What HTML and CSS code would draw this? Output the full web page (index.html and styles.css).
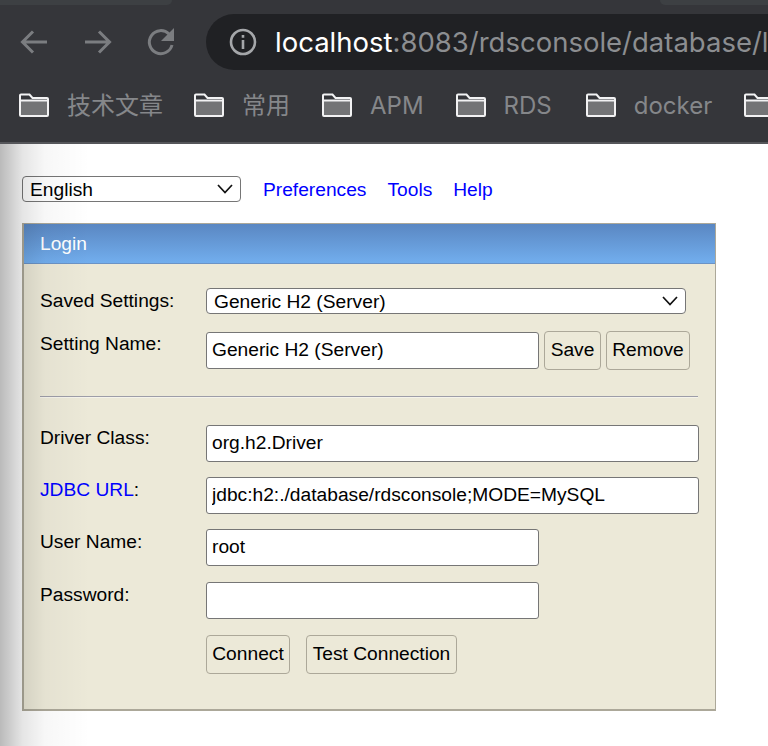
FILE: index.html
```html
<!DOCTYPE html>
<html lang="en">
<head>
<meta charset="utf-8">
<title>H2 Console Login</title>
<link rel="stylesheet" href="styles.css">
</head>
<body>
<header class="chrome">
  <div class="tabs"><div class="tab tab-left"></div><div class="tab tab-right"></div></div>
  <div class="toolbar">
    <svg class="nav-icon" width="32" height="32" viewBox="0 0 32 32" fill="none" stroke="#7b7d80" stroke-width="3"><path d="M29 16H5M15 5.500 4.500 16 15 26.500"/></svg>
    <svg class="nav-icon" width="32" height="32" viewBox="0 0 32 32" fill="none" stroke="#7b7d80" stroke-width="3"><path d="M3 16h24M17 5.500 27.500 16 17 26.500"/></svg>
    <svg class="nav-icon" width="32" height="32" viewBox="0 0 32 32" fill="none"><path d="M26 19a11.500 11.500 0 1 1-3-11" stroke="#7b7d80" stroke-width="3"/><path d="M28 2v13H15z" fill="#7b7d80"/></svg>
    <div class="omnibox">
      <svg width="28" height="28" viewBox="0 0 28 28" fill="none"><circle cx="14" cy="14" r="12" stroke="#a5a7aa" stroke-width="2.600"/><path d="M12.700 7h2.600v2.800h-2.600zM12.700 12h2.600v9h-2.600z" fill="#a5a7aa"/></svg>
      <span class="url"><span class="host">localhost</span>:8083/rdsconsole/database/l</span>
    </div>
  </div>
  <nav class="bookmarks">
    <a class="bm bm-1"><svg class="folder" width="32" height="26" viewBox="0 0 32 26"><use href="#folder"/></svg><span class="cjk">技术文章</span></a>
    <a class="bm bm-2"><svg class="folder" width="32" height="26" viewBox="0 0 32 26"><use href="#folder"/></svg><span class="cjk">常用</span></a>
    <a class="bm bm-3"><svg class="folder" width="32" height="26" viewBox="0 0 32 26"><use href="#folder"/></svg>APM</a>
    <a class="bm bm-4"><svg class="folder" width="32" height="26" viewBox="0 0 32 26"><use href="#folder"/></svg>RDS</a>
    <a class="bm bm-5"><svg class="folder" width="32" height="26" viewBox="0 0 32 26"><use href="#folder"/></svg>docker</a>
    <a class="bm"><svg class="folder" width="32" height="26" viewBox="0 0 32 26"><use href="#folder"/></svg></a>
  </nav>
</header>

<svg class="defs" width="0" height="0">
  <defs>
    <symbol id="folder" viewBox="0 0 32 26">
      <path d="M2 8h28v15H2z" fill="#737476"/>
      <path d="M2 23V3.500a1 1 0 0 1 1-1h8.500l3 3.500H29a1 1 0 0 1 1 1v16a1 1 0 0 1-1 1H3a1 1 0 0 1-1-1zM2 8.500h28" fill="none" stroke="#f2f2f3" stroke-width="2"/>
    </symbol>
  </defs>
</svg>

<main class="page">
  <div class="top-row">
    <div class="select-wrap lang">
      <select class="field-select"><option>English</option></select>
      <svg class="chev" width="16" height="10" viewBox="0 0 16 10" fill="none" stroke="#111" stroke-width="1.700"><path d="M1 1l7 7.500L15 1"/></svg>
    </div>
    <a class="top-link">Preferences</a>
    <a class="top-link">Tools</a>
    <a class="top-link">Help</a>
  </div>

  <section class="panel">
    <h1 class="panel-title">Login</h1>
    <form class="panel-body">
      <div class="row row-saved">
        <label class="lbl">Saved Settings:</label>
        <div class="select-wrap saved">
          <select class="field-select"><option>Generic H2 (Server)</option></select>
          <svg class="chev" width="16" height="10" viewBox="0 0 16 10" fill="none" stroke="#111" stroke-width="1.700"><path d="M1 1l7 7.500L15 1"/></svg>
        </div>
      </div>
      <div class="row row-name">
        <label class="lbl">Setting Name:</label>
        <input class="inp short" value="Generic H2 (Server)">
        <button type="button" class="btn btn-save">Save</button>
        <button type="button" class="btn btn-remove">Remove</button>
      </div>
      <hr class="rule">
      <div class="row row-field">
        <label class="lbl">Driver Class:</label>
        <input class="inp long" value="org.h2.Driver">
      </div>
      <div class="row row-field">
        <label class="lbl"><a class="jdbc">JDBC URL</a>:</label>
        <input class="inp long" value="jdbc:h2:./database/rdsconsole;MODE=MySQL">
      </div>
      <div class="row row-field row-tall">
        <label class="lbl">User Name:</label>
        <input class="inp short" value="root">
      </div>
      <div class="row row-field row-tall">
        <label class="lbl">Password:</label>
        <input class="inp short" type="password">
      </div>
      <div class="row row-actions">
        <span class="lbl"></span>
        <button type="button" class="btn btn-connect">Connect</button>
        <button type="button" class="btn btn-test">Test Connection</button>
      </div>
    </form>
  </section>
</main>
<div class="edge-shade"></div>
</body>
</html>
```
FILE: styles.css
```css
* { box-sizing: border-box; }
html, body { margin: 0; height: 100%; overflow: hidden; background: #fff; }
body { font-family: "Liberation Sans", Arial, sans-serif; font-size: 19.200px; color: #000; position: relative; }

.defs { position: absolute; }

/* browser chrome */
.chrome { height: 144px; background: #35363a; border-bottom: 2px solid #55565a; overflow: hidden; }
.tabs { height: 14px; display: flex; justify-content: space-between; }
.tab { height: 5px; background: #3d4043; }
.tab-left { width: 172px; border-bottom-right-radius: 6px; }
.tab-right { width: 108px; border-bottom-left-radius: 6px; }
.toolbar { height: 56px; display: flex; align-items: center; padding-left: 18px; }
.nav-icon { flex: none; margin-right: 32px; }
.nav-icon:nth-child(3) { margin-right: 28px; }
.omnibox { flex: 1; height: 56px; min-width: 0; background: #202124; border-radius: 28px 0 0 28px; display: flex; align-items: center; padding-left: 23px; gap: 18px; overflow: hidden; }
.omnibox svg { flex: none; }
.url { font-family: Inter, "Noto Sans", sans-serif; font-size: 27.500px; color: #8c8e91; white-space: nowrap; }
.host { color: #fff; }
.bookmarks { height: 70px; display: flex; align-items: center; padding-left: 18px; white-space: nowrap; }
.bm { flex: none; display: flex; align-items: center; gap: 17px; font-family: Inter, "Noto Sans CJK SC", sans-serif; font-size: 24px; color: #85878a; }
.cjk { padding-bottom: 4px; }
.bm-1 { margin-right: 30px; }
.bm-2, .bm-3, .bm-5 { margin-right: 31px; }
.bm-4 { margin-right: 33px; }
.folder { flex: none; }

/* page */
.page { padding: 32px 0 0 22px; }
.top-row { display: flex; align-items: center; height: 26px; }
.top-link { color: #0000ff; margin-left: 21px; padding-top: 2px; }
.lang { width: 219px; margin-right: 1px; }
.select-wrap { position: relative; height: 26px; }
.saved { width: 480px; }
.field-select { appearance: none; -webkit-appearance: none; width: 100%; height: 100%; padding: 0 0 0 7px; background: #fff; border: 1px solid #767676; border-radius: 4px; font: inherit; color: #000; }
.chev { position: absolute; right: 8px; top: 8px; pointer-events: none; }

.panel { width: 694px; height: 488px; margin-top: 21px; background: #ece9d8; border: 2px solid #aca899; border-top-width: 1px; border-bottom-width: 2px; border-right-width: 1px; }
.panel-title { margin: 0; height: 40px; padding-left: 16px; display: flex; align-items: center; font-size: 19.200px; font-weight: 400; color: #fff; background: linear-gradient(#5a87c2, #72aeee); border-bottom: 1px solid #6b93c6; }
.panel-body { padding: 24px 0 0 16px; }
.row { display: flex; align-items: flex-start; }
.lbl { flex: none; width: 166px; }
.row-saved { height: 43px; }
.row-saved .lbl { line-height: 26px; }
.row-name { height: 39px; }
.row-name .lbl { line-height: 26px; }
.row-name .inp { margin-top: 1px; }
.rule { width: 658px; height: 2px; margin: 26px 0 27px; border: 0; border-top: 1px solid #9d9da8; border-bottom: 1px solid #f5f3ea; }
.row-field { height: 52px; }
.row-tall { height: 53px; }
.row-field .lbl { line-height: 26px; }
.row-actions { height: 39px; }
.inp { height: 37px; padding: 0 5px 2px; background: #fff; border: 1px solid #767676; border-radius: 3px; font: inherit; color: #000; }
.short { width: 333px; }
.long { width: 493px; }
.btn { height: 39px; padding: 0 0 2px; background: #ece9d8; border: 1px solid #aca899; border-radius: 4px; font: inherit; color: #000; }
.btn-save { width: 57px; margin-left: 5px; }
.btn-remove { width: 84px; margin-left: 5px; }
.btn-connect { width: 84px; }
.btn-test { width: 151px; margin-left: 16px; }
.jdbc { color: #0000ff; }

.edge-shade { position: absolute; left: 0; top: 144px; bottom: 0; width: 90px; pointer-events: none; background: linear-gradient(to right, rgba(0,0,0,.27), rgba(0,0,0,.1) 25%, rgba(0,0,0,.03) 50%, rgba(0,0,0,0)); }
```
